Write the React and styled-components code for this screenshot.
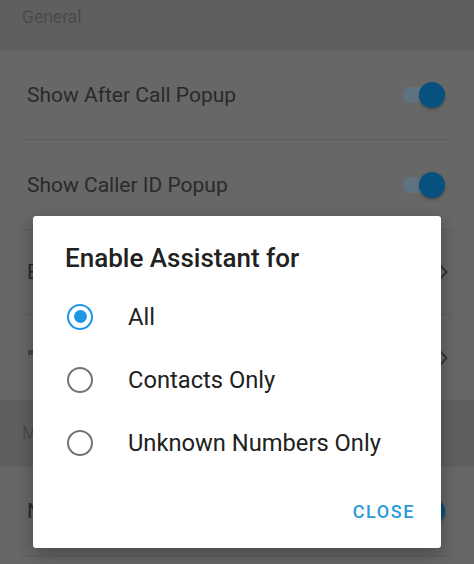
import React, { useState } from "react";
import styled, { createGlobalStyle } from "styled-components";

const GlobalStyle = createGlobalStyle`
  html, body {
    margin: 0;
    padding: 0;
    width: 474px;
    height: 564px;
    overflow: hidden;
    font-family: Roboto, "Noto Sans", "Liberation Sans", sans-serif;
  }
`;

const Screen = styled.div`
  position: relative;
  width: 474px;
  height: 564px;
  overflow: hidden;
  background: #676767;
`;

const List = styled.div`
  display: flex;
  flex-direction: column;
  margin-top: -16px;
`;

const SectionHeader = styled.div`
  height: 66px;
  display: flex;
  align-items: center;
  padding-left: 22px;
  background: #5f5f5f;
  color: #4a4a4a;
  font-size: 17.5px;
  border-bottom: 1px solid #5a5a5a;
  box-sizing: border-box;
`;

const Row = styled.div`
  height: ${(p) => p.$h}px;
  display: flex;
  align-items: center;
  justify-content: space-between;
  margin: 0 22px;
  padding-left: 5px;
  border-bottom: ${(p) => (p.$last ? "none" : "1px solid #5d5d5d")};
  box-sizing: border-box;
  color: #2a2a2a;
  font-size: 21px;
`;

const Toggle = styled.div`
  position: relative;
  width: 42px;
  height: 26px;
  margin-right: 7px;
  display: flex;
  align-items: center;
`;

const Track = styled.div`
  width: 36px;
  height: 16px;
  border-radius: 8px;
  background: #5f7280;
`;

const Thumb = styled.div`
  position: absolute;
  right: 0;
  top: 0;
  width: 26px;
  height: 26px;
  border-radius: 50%;
  background: #08507f;
  box-shadow: 0 2px 3px rgba(0, 0, 0, 0.25);
`;

const ChevronIcon = styled.svg`
  margin-right: 4px;
`;

const Chevron = () => (
  <ChevronIcon width="10" height="18" viewBox="0 0 10 18">
    <path d="M1.5 1.5 L8.5 9 L1.5 16.5" fill="none" stroke="#363636" strokeWidth="2" />
  </ChevronIcon>
);

const Backdrop = styled.div`
  position: absolute;
  inset: 0;
  display: flex;
  justify-content: center;
  padding-top: 216px;
  box-sizing: border-box;
`;

const Dialog = styled.div`
  width: 408px;
  height: 332px;
  background: #fff;
  border-radius: 3px;
  box-shadow: 0 6px 18px rgba(0, 0, 0, 0.3);
  display: flex;
  flex-direction: column;
  box-sizing: border-box;
  padding: 27px 0 0 0;
`;

const Title = styled.div`
  padding-left: 32px;
  font-size: 26px;
  font-weight: 500;
  color: #212121;
  line-height: 30px;
  margin-bottom: 12px;
`;

const Option = styled.label`
  display: flex;
  align-items: center;
  height: 63px;
  padding-left: 34px;
  font-size: 23.7px;
  color: #212121;
  cursor: pointer;
`;

const Radio = styled.span`
  width: 26px;
  height: 26px;
  border-radius: 50%;
  box-sizing: border-box;
  border: 2.6px solid ${(p) => (p.$on ? "#1e96e8" : "#747474")};
  display: flex;
  align-items: center;
  justify-content: center;
  margin-right: 35px;
  flex-shrink: 0;

  &::after {
    content: "";
    width: 13px;
    height: 13px;
    border-radius: 50%;
    background: ${(p) => (p.$on ? "#1e96e8" : "transparent")};
  }
`;

const Actions = styled.div`
  margin-top: auto;
  display: flex;
  justify-content: flex-end;
  padding: 0 26px 26px 0;
`;

const TextButton = styled.button`
  border: none;
  background: none;
  padding: 0;
  font-family: inherit;
  font-size: 18px;
  font-weight: 500;
  letter-spacing: 1.6px;
  color: #2a9bd8;
  cursor: pointer;
`;

const options = ["All", "Contacts Only", "Unknown Numbers Only"];

export default function App() {
  const [sel, setSel] = useState(0);
  return (
    <Screen>
      <GlobalStyle />
      <List>
        <SectionHeader>General</SectionHeader>
        <Row $h={90}>
          Show After Call Popup
          <Toggle>
            <Track />
            <Thumb />
          </Toggle>
        </Row>
        <Row $h={90}>
          Show Caller ID Popup
          <Toggle>
            <Track />
            <Thumb />
          </Toggle>
        </Row>
        <Row $h={85}>
          Enable Assistant
          <Chevron />
        </Row>
        <Row $h={85} $last>
          "Assistant" Greeting
          <Chevron />
        </Row>
        <SectionHeader>Miscellaneous</SectionHeader>
        <Row $h={90}>
          Notifications
          <Toggle>
            <Track />
            <Thumb />
          </Toggle>
        </Row>
      </List>
      <Backdrop>
        <Dialog>
          <Title>Enable Assistant for</Title>
          {options.map((o, i) => (
            <Option key={o} onClick={() => setSel(i)}>
              <Radio $on={sel === i} />
              {o}
            </Option>
          ))}
          <Actions>
            <TextButton>CLOSE</TextButton>
          </Actions>
        </Dialog>
      </Backdrop>
    </Screen>
  );
}
